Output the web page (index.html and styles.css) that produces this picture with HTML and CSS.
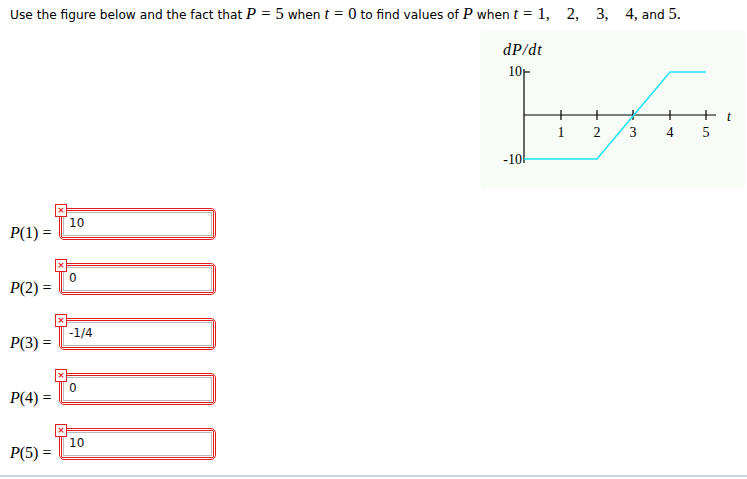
FILE: index.html
```html
<!DOCTYPE html>
<html>
<head>
<meta charset="utf-8">
<link rel="stylesheet" href="styles.css">
</head>
<body>
<p class="prompt">Use the figure below and the fact that <span class="m"><i>P</i><span class="eq">=</span>5</span> when <span class="m"><i>t</i><span class="eq">=</span>0</span> to find values of <span class="m"><i>P</i></span> when <span class="m"><i>t</i><span class="eq">=</span>1,</span><span class="m sp">2,</span><span class="m sp">3,</span><span class="m sp">4,</span> and <span class="m">5.</span></p>

<div class="figure-row">
  <div class="figure">
    <svg width="264" height="156" viewBox="0 0 264 156">
      <g class="axes">
        <line x1="43" y1="38" x2="43" y2="132"/>
        <line x1="43" y1="41" x2="49" y2="41"/>
        <line x1="43" y1="84" x2="235" y2="84"/>
        <line x1="80" y1="79" x2="80" y2="89"/>
        <line x1="116" y1="79" x2="116" y2="89"/>
        <line x1="152" y1="79" x2="152" y2="89"/>
        <line x1="189" y1="79" x2="189" y2="89"/>
        <line x1="225" y1="79" x2="225" y2="89"/>
      </g>
      <polyline class="curve" points="43,128 116,128 189,41 225,41"/>
      <text class="lbl it big" x="22" y="24">dP/dt</text>
      <text class="lbl" x="41" y="45" text-anchor="end">10</text>
      <text class="lbl" x="41" y="133" text-anchor="end">-10</text>
      <text class="lbl" x="80" y="106" text-anchor="middle">1</text>
      <text class="lbl" x="116" y="106" text-anchor="middle">2</text>
      <text class="lbl" x="152" y="106" text-anchor="middle">3</text>
      <text class="lbl" x="189" y="106" text-anchor="middle">4</text>
      <text class="lbl" x="225" y="106" text-anchor="middle">5</text>
      <text class="lbl it" x="246" y="90">t</text>
    </svg>
  </div>
</div>

<div class="answers">
  <div class="row">
    <span class="label"><i>P</i>(1) =</span>
    <div class="answer"><span class="flag">×</span><div class="outer"><div class="inner"><div class="field">10</div></div></div></div>
  </div>
  <div class="row">
    <span class="label"><i>P</i>(2) =</span>
    <div class="answer"><span class="flag">×</span><div class="outer"><div class="inner"><div class="field">0</div></div></div></div>
  </div>
  <div class="row">
    <span class="label"><i>P</i>(3) =</span>
    <div class="answer"><span class="flag">×</span><div class="outer"><div class="inner"><div class="field">-1/4</div></div></div></div>
  </div>
  <div class="row">
    <span class="label"><i>P</i>(4) =</span>
    <div class="answer"><span class="flag">×</span><div class="outer"><div class="inner"><div class="field">0</div></div></div></div>
  </div>
  <div class="row">
    <span class="label"><i>P</i>(5) =</span>
    <div class="answer"><span class="flag">×</span><div class="outer"><div class="inner"><div class="field">10</div></div></div></div>
  </div>
</div>
<div class="footer"></div>
</body>
</html>
```

FILE: styles.css
```css
html, body {
  margin: 0;
  padding: 0;
  background: #fff;
}
body {
  font-family: "DejaVu Sans", Verdana, sans-serif;
  font-size: 12px;
  color: #000;
}
.prompt {
  margin: 0;
  padding: 5px 0 0 10px;
  height: 26px;
  line-height: 18px;
  white-space: nowrap;
  font-size: 12.2px;
}
.m {
  font-family: "Liberation Serif", "Times New Roman", serif;
  font-size: 16.5px;
}
.m i { font-style: italic; }
.eq { margin: 0 5px; }
.sp { margin-left: 17px; }

.figure-row {
  display: flex;
  justify-content: flex-end;
  padding-right: 2px;
}
.figure {
  width: 264px;
  height: 156px;
  background: #f7fcf7;
}
.figure svg { display: block; }
.axes line {
  stroke: #000;
  stroke-width: 1.2;
}
.curve {
  fill: none;
  stroke: #22e3f0;
  stroke-width: 1.6;
}
.lbl {
  font-family: "Liberation Serif", "Times New Roman", serif;
  font-size: 14px;
  fill: #000;
}
.lbl.it { font-style: italic; }
.lbl.big { font-size: 16px; letter-spacing: 1px; }

.answers {
  margin-top: 17px;
  display: flex;
  flex-direction: column;
  gap: 19px;
}
.row {
  display: flex;
  align-items: flex-end;
  padding-left: 10px;
}
.label {
  width: 49px;
  font-family: "Liberation Serif", "Times New Roman", serif;
  font-size: 16px;
  line-height: 14px;
  padding-bottom: 0;
  white-space: nowrap;
}
.answer {
  position: relative;
  padding-top: 4px;
}
.flag {
  position: absolute;
  top: 0;
  left: -4px;
  width: 10px;
  height: 11px;
  border: 1px solid #e21c1c;
  background: #fff;
  color: #e21c1c;
  font-family: "DejaVu Sans", sans-serif;
  font-weight: bold;
  font-size: 9px;
  line-height: 11px;
  text-align: center;
  z-index: 1;
}
.outer {
  box-sizing: border-box;
  width: 157px;
  height: 32px;
  border: 1px solid #e21c1c;
  border-radius: 5px;
  padding: 1px;
  background: #fff;
}
.inner {
  box-sizing: border-box;
  height: 100%;
  border: 1px solid #e21c1c;
  border-radius: 1px;
  padding: 1px;
}
.field {
  box-sizing: border-box;
  height: 100%;
  border: 1px solid #b8b8b8;
  padding: 0 0 0 5px;
  font-family: "DejaVu Sans", Verdana, sans-serif;
  font-size: 12px;
  line-height: 20px;
  color: #111;
}
.footer {
  margin-top: 15px;
  border-top: 2px solid #cad6e2;
}
```
